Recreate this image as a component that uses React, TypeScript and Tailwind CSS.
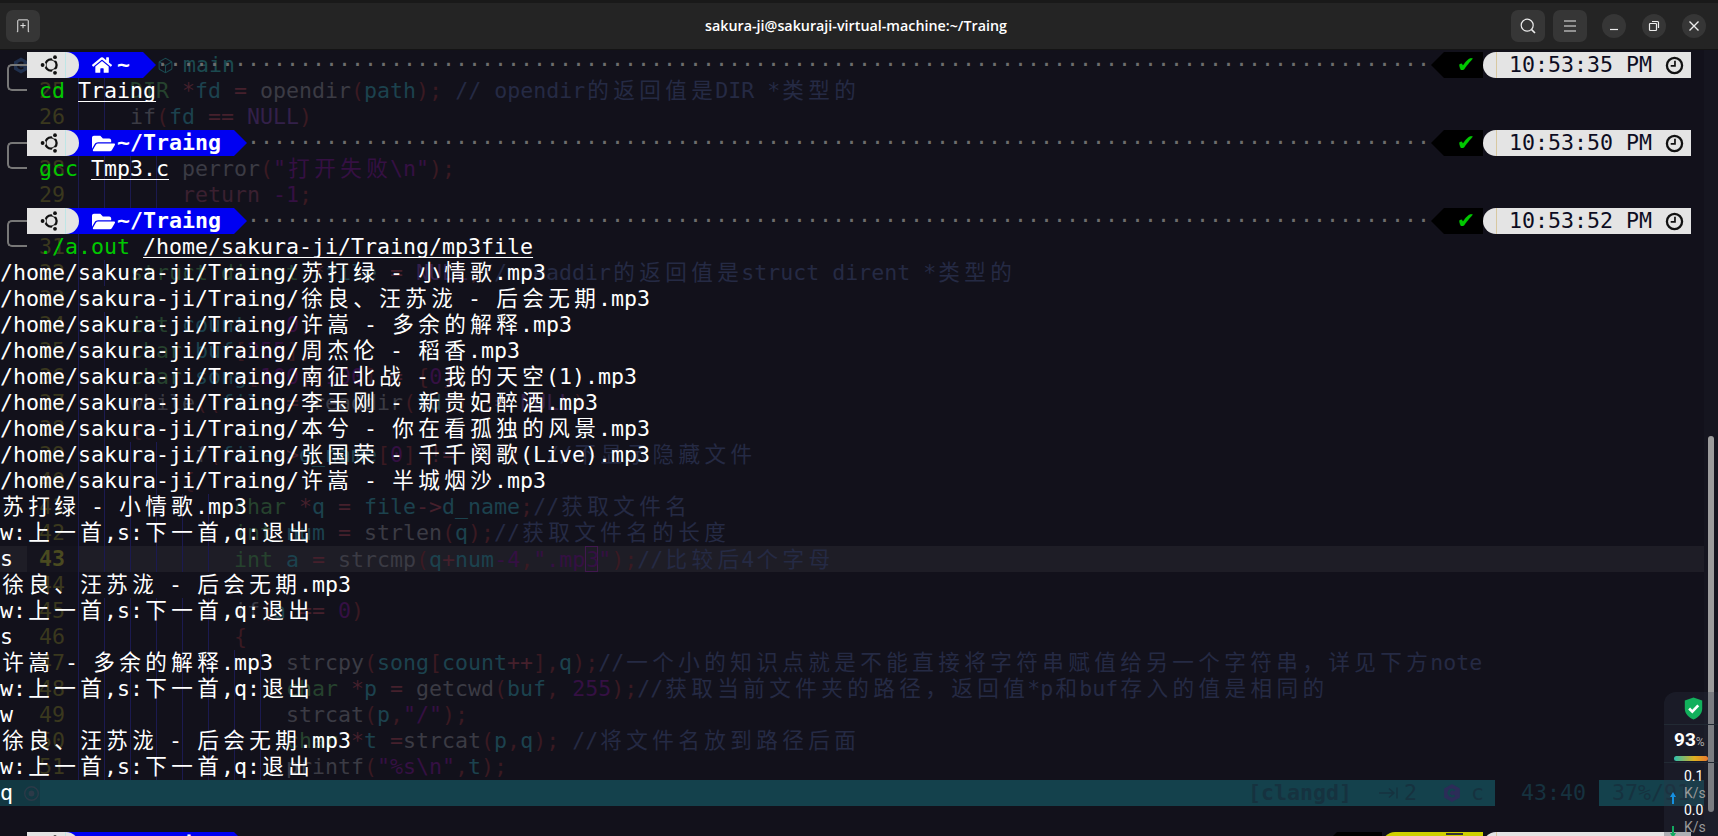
import type { ReactNode } from 'react';
import { Box } from 'lucide-react';
import { FaHome, FaFolderOpen } from 'react-icons/fa';

const mono = "font-['DejaVu_Sans_Mono','Noto_Sans_CJK_SC',monospace]";

// dim colours of the editor that shows through the terminal
const plain = 'text-[#3b3b44]';
const kw = 'text-[#26422e]';
const vr = 'text-[#1c424e]';
const op = 'text-[#45202c]';
const par = 'text-[#3a1a22]';
const num = 'text-[#351043]';
const cm = 'text-[#252a44]';
const ctl = 'text-[#3a2030]';
const nul = 'text-[#33204a]';

type Seg = [string, string];
type EditorLine = { n: number; guides: number; code: Seg[]; current?: boolean };

function Cells({ text, className = '' }: { text: string; className?: string }) {
  const parts = text.split(/([\u2e80-\uffef])/).filter(Boolean);
  return (
    <span className={className}>
      {parts.map((p, i) =>
        /^[\u2e80-\uffef]$/.test(p) ? (
          <span key={i} className="inline-block w-[26px] text-center">
            {p}
          </span>
        ) : (
          <span key={i}>{p}</span>
        ),
      )}
    </span>
  );
}

const editorLines: EditorLine[] = [
  { n: 25, guides: 2, code: [['DIR ', kw], ['*', op], ['fd ', vr], ['= ', op], ['opendir', plain], ['(', par], ['path', vr], ['); ', par], ['// opendir的返回值是DIR *类型的', cm]] },
  { n: 26, guides: 2, code: [['if', plain], ['(', par], ['fd ', vr], ['== ', op], ['NULL', nul], [')', par]] },
  { n: 27, guides: 2, code: [['{', par]] },
  { n: 28, guides: 4, code: [['perror', plain], ['(', par], ['"打开失败\\n"', num], [');', par]] },
  { n: 29, guides: 4, code: [['return ', ctl], ['-1', num], [';', par]] },
  { n: 30, guides: 2, code: [['}', par]] },
  { n: 31, guides: 1, code: [] },
  { n: 32, guides: 2, code: [['struct ', kw], ['dirent ', kw], ['*', op], ['file ', vr], ['= ', op], ['NULL', nul], [';', par], ['// readdir的返回值是struct dirent *类型的', cm]] },
  { n: 33, guides: 1, code: [] },
  { n: 34, guides: 2, code: [['int ', kw], ['count ', vr], ['= ', op], ['0', num], [';', par]] },
  { n: 35, guides: 2, code: [['char ', kw], ['buf', vr], ['[', par], ['255', num], ['];', par]] },
  { n: 36, guides: 2, code: [['char ', kw], ['song', vr], ['[', par], ['100', num], ['][', par], ['100', num], ['] ', par], ['= ', op], ['{', par], ['0', num], ['};', par]] },
  { n: 37, guides: 2, code: [['while', plain], ['((', par], ['file ', vr], ['= ', op], ['readdir', plain], ['(', par], ['fd', vr], [')) ', par], ['!= ', op], ['NULL', nul], [')', par]] },
  { n: 38, guides: 2, code: [['{', par]] },
  { n: 39, guides: 4, code: [['if', plain], ['(', par], ['file', vr], ['->', op], ['d_name', vr], ['[', par], ['0', num], ['] ', par], ['!= ', op], ["'.'", num], [')  ', par], ['//不显示隐藏文件', cm]] },
  { n: 40, guides: 4, code: [['{', par]] },
  { n: 41, guides: 6, code: [['char ', kw], ['*', op], ['q ', vr], ['= ', op], ['file', vr], ['->', op], ['d_name', vr], [';', par], ['//获取文件名', cm]] },
  { n: 42, guides: 6, code: [['int ', kw], ['num ', vr], ['= ', op], ['strlen', plain], ['(', par], ['q', vr], [');', par], ['//获取文件名的长度', cm]] },
  { n: 43, guides: 6, current: true, code: [['int ', kw], ['a ', vr], ['= ', op], ['strcmp', plain], ['(', par], ['q', vr], ['+', op], ['num', vr], ['-4', num], [',', par], ['".mp', num]] },
  { n: 44, guides: 1, code: [] },
  { n: 45, guides: 6, code: [['if', plain], ['(', par], ['a ', vr], ['== ', op], ['0', num], [')', par]] },
  { n: 46, guides: 6, code: [['{', par]] },
  { n: 47, guides: 8, code: [['strcpy', plain], ['(', par], ['song', vr], ['[', par], ['count', vr], ['++', op], ['],', par], ['q', vr], [');', par], ['//一个小的知识点就是不能直接将字符串赋值给另一个字符串，详见下方note', cm]] },
  { n: 48, guides: 8, code: [['char ', kw], ['*', op], ['p ', vr], ['= ', op], ['getcwd', plain], ['(', par], ['buf', vr], [', ', par], ['255', num], [');', par], ['//获取当前文件夹的路径，返回值*p和buf存入的值是相同的', cm]] },
  { n: 49, guides: 8, code: [['strcat', plain], ['(', par], ['p', vr], [',', par], ['"/"', num], [');', par]] },
  { n: 50, guides: 8, code: [['char ', kw], ['*', op], ['t ', vr], ['=', op], ['strcat', plain], ['(', par], ['p', vr], [',', par], ['q', vr], ['); ', par], ['//将文件名放到路径后面', cm]] },
  { n: 51, guides: 8, code: [['printf', plain], ['(', par], ['"%s\\n"', num], [',', par], ['t', vr], [');', par]] },
];

function EditorRow({ line }: { line: EditorLine }) {
  return (
    <div className={`flex h-[26px] whitespace-pre ${line.current ? 'bg-[#1e1d26]' : ''}`}>
      <div className="w-[27px] shrink-0" />
      <div className={`flex w-[51px] shrink-0 pl-[12px] ${line.current ? 'bg-[#15141e] font-bold text-[#4a4a20]' : 'text-[#3a381e]'}`}>
        {line.n}
      </div>
      {Array.from({ length: line.guides }).map((_, i) => (
        <span key={i} className="h-[26px] w-[26px] shrink-0 border-l border-[#1b1a50]" />
      ))}
      <div>
        {line.code.map(([t, c], i) => (
          <Cells key={i} text={t} className={c} />
        ))}
        {line.current && (
          <>
            <span className={`inline-block h-[26px] w-[13px] border border-[#41184f] ${num}`}>3</span>
            <Cells text={'"'} className={num} />
            <Cells text=");" className={par} />
            <Cells text="//比较后4个字母" className={cm} />
          </>
        )}
      </div>
    </div>
  );
}

function EditorLayer() {
  return (
    <div className="absolute inset-0">
      {/* winbar */}
      <div className="flex h-[26px] items-center">
        <svg viewBox="0 0 16 16" className="ml-[13px] h-[17px] w-[16px] text-[#20304e]">
          <path fill="currentColor" d="M8 0l7 4v8l-7 4-7-4V4zm0 4a4 4 0 1 0 3 6.6L9.6 9.4a2 2 0 1 1 0-2.8L11 5.4A4 4 0 0 0 8 4z" />
        </svg>
        <Box size={17} strokeWidth={1.5} className="ml-[128px] text-[#1b4a50]" />
        <span className="ml-[9px] leading-[26px] text-[#1b4a50]">main</span>
      </div>
      {editorLines.map((l) => (
        <EditorRow key={l.n} line={l} />
      ))}
      {/* status line */}
      <div className="flex h-[26px] whitespace-pre leading-[26px] text-[#16323f]">
        <div className="flex w-[1495px] shrink-0 items-center bg-[#14414c]">
          <div className="flex h-full w-[40px] items-center justify-end bg-[#123842]">
            <svg viewBox="0 0 20 20" className="h-[17px] w-[17px] text-[#2c3a48]">
              <circle cx="10" cy="10" r="8" fill="none" stroke="currentColor" strokeWidth="1.6" />
              <circle cx="10" cy="10" r="3.4" fill="currentColor" />
            </svg>
          </div>
          <span className="ml-[1208px] font-bold">[clangd]</span>
          <svg viewBox="0 0 20 14" className="ml-[26px] h-[14px] w-[20px]" fill="none" stroke="currentColor" strokeWidth="1.4">
            <path d="M1 7h15M11 2.5L16 7l-5 4.5M19 1.5v11" />
          </svg>
          <span className="ml-[6px]">2</span>
          <svg viewBox="0 0 16 16" className="ml-[26px] h-[20px] w-[18px] text-[#2c2c58]">
            <path fill="currentColor" d="M8 0l7 4v8l-7 4-7-4V4zm0 4a4 4 0 1 0 3 6.6L9.6 9.4a2 2 0 1 1 0-2.8L11 5.4A4 4 0 0 0 8 4z" />
          </svg>
          <span className="ml-[10px]">c</span>
        </div>
        <span className="ml-[26px] w-[78px] shrink-0">43:40</span>
        <div className="flex-1 bg-[#14414c] pl-[13px]">37%/91</div>
      </div>
    </div>
  );
}

function UbuntuLogo() {
  return (
    <svg viewBox="0 0 20 20" className="h-[20px] w-[20px]">
      <circle cx="11" cy="10" r="5.6" fill="none" stroke="#111" strokeWidth="2.3" />
      <circle cx="15" cy="2.8" r="3" fill="#e4e4e4" />
      <circle cx="3" cy="10" r="3" fill="#e4e4e4" />
      <circle cx="15" cy="17.2" r="3" fill="#e4e4e4" />
      <circle cx="15" cy="2.2" r="1.9" fill="#111" />
      <circle cx="2.6" cy="10" r="1.9" fill="#111" />
      <circle cx="15" cy="17.8" r="1.9" fill="#111" />
    </svg>
  );
}

function ClockIcon() {
  return (
    <svg viewBox="0 0 20 20" className="h-[19px] w-[19px]">
      <circle cx="10" cy="10" r="8" fill="none" stroke="#111" strokeWidth="2.4" />
      <path d="M10.5 5v5.5H6" fill="none" stroke="#111" strokeWidth="1.8" />
    </svg>
  );
}

function Prompt({ dir, time, running }: { dir: string; time: string; running?: boolean }) {
  const isHome = dir === '~';
  return (
    <div className="flex h-[26px] leading-[26px]">
      <div className="ml-[7px] mt-[12px] h-[14px] w-[20px] shrink-0 rounded-tl-[5px] border-l-2 border-t-2 border-[#777]" />
      <div className="flex w-[39px] shrink-0 items-center border-r border-[#bfe6e6] bg-[#e4e4e4] pl-[13px]">
        <UbuntuLogo />
      </div>
      <div className="flex shrink-0 bg-[#0000f2] pr-[13px] font-bold text-white">
        <div className="h-[26px] w-[13px] rounded-r-full bg-[#e4e4e4]" />
        <div className="flex w-[38px] items-center pl-[13px]">
          {isHome ? <FaHome size={20} /> : <FaFolderOpen size={23} />}
        </div>
        <span>{dir}</span>
      </div>
      <div className="w-[13px] shrink-0 bg-[#0000f2] [clip-path:polygon(0_0,100%_50%,0_100%)]" />
      <div className="min-w-0 flex-1 overflow-hidden whitespace-pre text-[#6d6d6d]">{'·'.repeat(120)}</div>
      <div className="w-[13px] shrink-0 bg-black [clip-path:polygon(100%_0,0_50%,100%_100%)]" />
      {running ? (
        <div className="flex h-[26px] w-[45px] shrink-0 bg-black" />
      ) : (
        <div className="flex h-[26px] w-[39px] shrink-0 items-center justify-center bg-black pl-[5px] text-[22px] font-bold text-[#00c800]">
          <span className="font-['DejaVu_Sans',sans-serif]">✔</span>
        </div>
      )}
      {running && (
        <div className="flex w-[101px] shrink-0 justify-end rounded-l-[13px] bg-[#cfd000] pr-[20px]">
          <div className="mt-[1px] h-[2px] w-[17px] bg-[#333]" />
        </div>
      )}
      <div className="h-[26px] w-[13px] shrink-0 rounded-l-full bg-[#e4e4e4]" />
      <div className="flex w-[195px] shrink-0 items-center border-l border-[#d8c8a0] bg-[#e4e4e4] pl-[12px] whitespace-pre text-[#0c0c22]">
        <span>{time}</span>
        <span className="ml-[13px]">
          <ClockIcon />
        </span>
      </div>
      <div className="w-[13px] shrink-0" />
    </div>
  );
}

function Command({ cmd, args }: { cmd: string; args: string }) {
  return (
    <div className="flex h-[26px] whitespace-pre leading-[26px]">
      <div className="ml-[7px] h-[13px] w-[20px] shrink-0 rounded-bl-[5px] border-b-2 border-l-2 border-[#777]" />
      <span className="ml-[12px] text-[#00c800]">{cmd}</span>
      <span> </span>
      <span className="text-white underline decoration-1 underline-offset-[3px] [text-decoration-skip-ink:none]">{args}</span>
    </div>
  );
}

function Out({ children }: { children: string }) {
  return (
    <div className="h-[26px] whitespace-pre leading-[26px] text-white">
      <Cells text={children} />
    </div>
  );
}

const P = '/home/sakura-ji/Traing/';
const Menu = 'w:上一首,s:下一首,q:退出';

const outputLines = [
  P + '苏打绿 - 小情歌.mp3',
  P + '徐良、汪苏泷 - 后会无期.mp3',
  P + '许嵩 - 多余的解释.mp3',
  P + '周杰伦 - 稻香.mp3',
  P + '南征北战 - 我的天空(1).mp3',
  P + '李玉刚 - 新贵妃醉酒.mp3',
  P + '本兮 - 你在看孤独的风景.mp3',
  P + '张国荣 - 千千阕歌(Live).mp3',
  P + '许嵩 - 半城烟沙.mp3',
  '苏打绿 - 小情歌.mp3',
  Menu,
  's',
  '徐良、汪苏泷 - 后会无期.mp3',
  Menu,
  's',
  '许嵩 - 多余的解释.mp3',
  Menu,
  'w',
  '徐良、汪苏泷 - 后会无期.mp3',
  Menu,
  'q',
];

function TitleButton({ children }: { children: ReactNode }) {
  return (
    <div className="flex h-[32px] w-[34px] items-center justify-center rounded-[7px] bg-[#363636] text-[#ececec]">
      {children}
    </div>
  );
}

function WinButton({ children }: { children: ReactNode }) {
  return (
    <div className="flex h-[24px] w-[24px] items-center justify-center rounded-full bg-[#363636] text-[#ececec]">
      {children}
    </div>
  );
}

function TitleBar() {
  return (
    <div className="grid h-[50px] shrink-0 grid-cols-[1fr_auto_1fr] items-center border-t-[3px] border-b border-t-[#191919] border-b-[#141414] bg-[#242424] pl-[6px] pr-[12px]">
      <div>
        <TitleButton>
          <svg viewBox="0 0 16 16" className="h-[14px] w-[14px]" fill="none" stroke="currentColor" strokeWidth="1.1">
            <path d="M1 14.5h1V2a1 1 0 0 1 1-1h10a1 1 0 0 1 1 1v12.5h1M8 4.5v6M5 7.5h6" />
          </svg>
        </TitleButton>
      </div>
      <div className="font-['Open_Sans',sans-serif] text-[14.3px] font-semibold text-white">
        sakura-ji@sakuraji-virtual-machine:~/Traing
      </div>
      <div className="flex items-center justify-end gap-[8px]">
        <TitleButton>
          <svg viewBox="0 0 16 16" className="h-[16px] w-[16px]" fill="none" stroke="currentColor" strokeWidth="1.2">
            <circle cx="7.2" cy="7.2" r="6" />
            <path d="M11.6 11.6l3.4 3.4" strokeWidth="1.6" />
          </svg>
        </TitleButton>
        <TitleButton>
          <svg viewBox="0 0 16 16" className="h-[16px] w-[16px]" fill="none" stroke="currentColor" strokeWidth="1.2">
            <path d="M2 3h12M2 8h12M2 13h12" />
          </svg>
        </TitleButton>
        <div className="ml-[7px] flex items-center gap-[16px]">
          <WinButton>
            <svg viewBox="0 0 16 16" className="h-[16px] w-[16px]" fill="none" stroke="currentColor" strokeWidth="1.2">
              <path d="M4 11.5h8" />
            </svg>
          </WinButton>
          <WinButton>
            <svg viewBox="0 0 16 16" className="h-[16px] w-[16px]" fill="none" stroke="currentColor" strokeWidth="1.2">
              <rect x="3.5" y="5.5" width="7" height="7" rx="0.8" />
              <path d="M6 3.5h5.5a1 1 0 0 1 1 1V10" />
            </svg>
          </WinButton>
          <WinButton>
            <svg viewBox="0 0 16 16" className="h-[16px] w-[16px]" fill="none" stroke="currentColor" strokeWidth="1.4">
              <path d="M3.5 3.5l9 9M12.5 3.5l-9 9" />
            </svg>
          </WinButton>
        </div>
      </div>
    </div>
  );
}

// floating speed / battery widget at the bottom right
function SideWidget() {
  return (
    <div className="absolute bottom-0 right-0 flex h-[144px] w-[54px] flex-col rounded-tl-[12px] bg-[#303644]/30 font-['Roboto',sans-serif]">
      <div className="flex h-[38px] items-center justify-center border-b border-[#222a34] pl-[4px]">
        <svg viewBox="0 0 24 28" className="h-[23px] w-[19px]">
          <path fill="#12b05c" d="M12 0l11 4v10c0 7-5 11-11 14C6 25 1 21 1 14V4z" />
          <path fill="none" stroke="#fff" strokeWidth="3.4" d="M6.5 14l4 4 7.5-8" />
        </svg>
      </div>
      <div className="flex h-[43px] flex-col border-b border-[#222a34] pl-[10px] pt-[2px]">
        <div className="leading-[26px] text-white">
          <span className="text-[19px] font-bold">93</span>
          <span className="text-[12px] text-[#aaa]">%</span>
        </div>
        <div className="mt-[1px] h-[5px] w-[34px] rounded-full bg-[linear-gradient(90deg,#2cc0b0,#e0b020_60%,#e87830)]" />
      </div>
      <div className="flex flex-1 flex-col pl-[20px] pt-[5px] text-[14px] leading-[17px] text-white">
        <span>0.1</span>
        <span className="text-[#999]">K/s</span>
        <span>0.0</span>
        <span className="text-[#999]">K/s</span>
      </div>
      <svg viewBox="0 0 6 12" className="absolute left-[6px] top-[100px] h-[12px] w-[6px]">
        <path fill="#1690e0" d="M3 0l3 5H4v7H2V5H0z" />
      </svg>
      <svg viewBox="0 0 6 12" className="absolute left-[6px] top-[134px] h-[12px] w-[6px]">
        <path fill="#12a860" d="M2 0h2v7h2l-3 5-3-5h2z" />
      </svg>
    </div>
  );
}

export default function App() {
  return (
    <div className="flex h-[836px] w-[1718px] flex-col overflow-hidden bg-[#12111b]">
      <TitleBar />
      <div className="relative flex min-h-0 flex-1 pt-[2px]">
        <div className={`relative w-[1704px] shrink-0 text-[21.6px] leading-[26px] ${mono}`}>
          <EditorLayer />
          <div className="relative">
            <Prompt dir="~" time="10:53:35 PM" />
            <Command cmd="cd" args="Traing" />
            <div className="h-[26px]" />
            <Prompt dir="~/Traing" time="10:53:50 PM" />
            <Command cmd="gcc" args="Tmp3.c" />
            <div className="h-[26px]" />
            <Prompt dir="~/Traing" time="10:53:52 PM" />
            <Command cmd="./a.out" args="/home/sakura-ji/Traing/mp3file" />
            {outputLines.map((l, i) => (
              <Out key={i}>{l}</Out>
            ))}
            <div className="h-[26px]" />
            <Prompt dir="~/Traing" time="" running />
          </div>
        </div>
        {/* scrollbar column */}
        <div className="-mt-[2px] w-[14px] shrink-0 bg-[#15151f] pl-[4px] pr-[4px] pt-[386px]">
          <div className="h-[376px] rounded-full bg-[#9c9c9c]" />
        </div>
        <SideWidget />
      </div>
    </div>
  );
}
